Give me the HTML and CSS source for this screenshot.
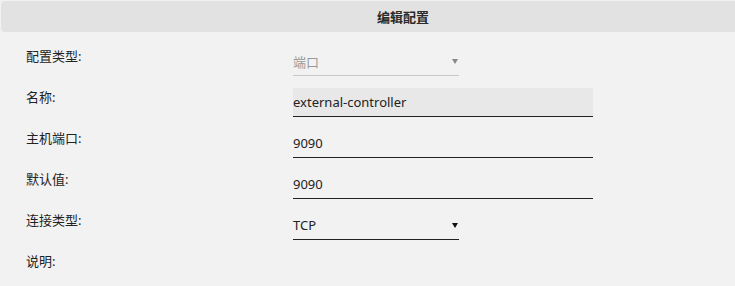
FILE: index.html
```html
<!DOCTYPE html>
<html lang="zh-CN">
<head>
<meta charset="utf-8">
<title>编辑配置</title>
<link rel="stylesheet" href="styles.css">
</head>
<body>
<div class="page">
  <div class="header"><span class="title">编辑配置</span></div>
  <form class="form">
    <label class="label">配置类型:</label>
    <div class="select disabled"><span class="value">端口</span><span class="arrow"></span></div>

    <label class="label">名称:</label>
    <input class="field filled" type="text" value="external-controller">

    <label class="label">主机端口:</label>
    <input class="field" type="text" value="9090">

    <label class="label">默认值:</label>
    <input class="field" type="text" value="9090">

    <label class="label">连接类型:</label>
    <div class="select"><span class="value">TCP</span><span class="arrow"></span></div>

    <label class="label">说明:</label>
    <div></div>
  </form>
</div>
</body>
</html>
```

FILE: styles.css
```css
html, body {
  margin: 0;
  padding: 0;
  background: #f2f2f2;
}
body {
  font-family: "Noto Sans", "Noto Sans CJK SC", sans-serif;
  font-size: 13px;
  color: #222;
}
.page {
  padding-top: 1px;
}
.header {
  margin-left: 1px;
  height: 31px;
  background: #e2e2e2;
  border-radius: 4px 0 0 4px;
  display: flex;
  align-items: center;
  justify-content: center;
  padding-left: 70px;
}
.title {
  font-weight: bold;
  color: #2a2a2a;
  font-size: 13px;
}
.form {
  display: grid;
  grid-template-columns: 267px 300px;
  grid-auto-rows: 29px;
  row-gap: 12px;
  padding-left: 26px;
  margin-top: 15px;
}
.label {
  color: #222;
  line-height: 19px;
  align-self: start;
}
.field {
  box-sizing: border-box;
  width: 300px;
  height: 29px;
  margin: 0;
  padding: 0 0 1px 0;
  border: none;
  border-bottom: 1px solid #222;
  background: transparent;
  font-family: "Noto Sans", "Noto Sans CJK SC", sans-serif;
  font-size: 13px;
  color: #222;
  outline: none;
}
.field.filled {
  background: #e8e8e8;
}
.select {
  box-sizing: border-box;
  width: 166px;
  height: 29px;
  border-bottom: 1px solid #222;
  display: flex;
  align-items: center;
  justify-content: space-between;
  padding-right: 1px;
}
.select .value {
  color: #222;
}
.select .arrow {
  width: 0;
  height: 0;
  border-left: 3px solid transparent;
  border-right: 3px solid transparent;
  border-top: 5px solid #111;
}
.select.disabled {
  border-bottom-color: #c8c8c8;
}
.select.disabled .value {
  color: #999;
}
.select.disabled .arrow {
  border-top-color: #888;
}
```
